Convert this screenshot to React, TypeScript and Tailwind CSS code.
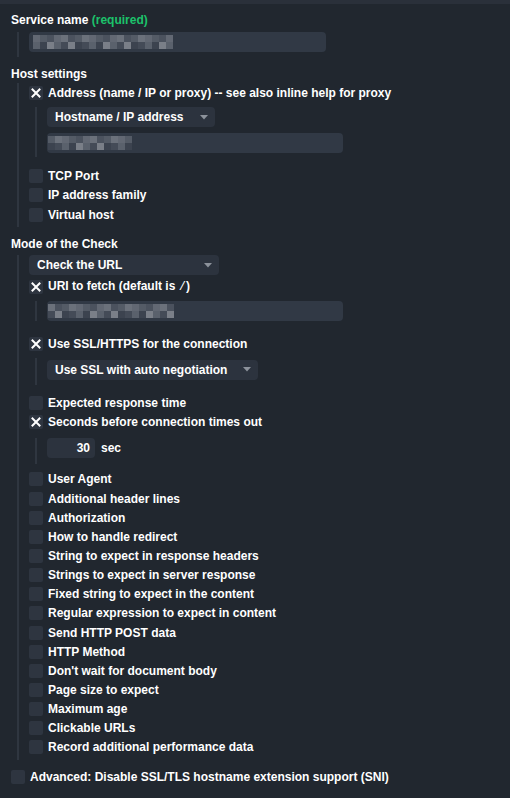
import React from "react";

const font = { fontFamily: '"Liberation Sans", Arial, sans-serif' };

const greys = ["#3c434f", "#4b525e", "#5a616c", "#6b717b", "#7a7f88", "#545b66", "#444b57", "#626873"];

// pixelated (redacted) input value
const Mosaic = ({ cols, seed }: { cols: number; seed: number }) => (
  <div className="flex flex-col">
    {[0, 1].map((r) => (
      <div key={r} className="flex">
        {Array.from({ length: cols }).map((_, c) => (
          <div
            key={c}
            className="h-[7px] w-[7px]"
            style={{ backgroundColor: greys[(c * 5 + r * 3 + seed * 7 + ((c * c) % 4)) % greys.length] }}
          />
        ))}
      </div>
    ))}
  </div>
);

const Check = ({ on }: { on?: boolean }) => (
  <div className="flex h-[14px] w-[14px] shrink-0 items-center justify-center rounded-[2px] bg-[#2e3540]">
    {on && (
      <svg width="10" height="10" viewBox="0 0 10 10">
        <path d="M1.5 1.5 L8.5 8.5 M8.5 1.5 L1.5 8.5" stroke="#fff" strokeWidth="2" strokeLinecap="square" />
      </svg>
    )}
  </div>
);

const Row = ({ label, on, className = "" }: { label: React.ReactNode; on?: boolean; className?: string }) => (
  <div className={"flex h-[19.15px] items-center gap-[5px] " + className}>
    <Check on={on} />
    <span>{label}</span>
  </div>
);

const Select = ({ label, width }: { label: string; width: string }) => (
  <div className={"flex h-[20px] items-center justify-between rounded-[4px] bg-[#2c333e] pl-[8px] pr-[7px] " + width}>
    <span>{label}</span>
    <svg width="8" height="5" viewBox="0 0 8 5">
      <path d="M0 0 H8 L4 4.5 Z" fill="#8c929b" />
    </svg>
  </div>
);

const Input = ({ width, children }: { width: string; children?: React.ReactNode }) => (
  <div className={"flex h-[20px] items-center rounded-[4px] bg-[#313945] pl-[1px] " + width}>{children}</div>
);

const Nest = ({ className = "", children }: { className?: string; children: React.ReactNode }) => (
  <div className={"border-l-2 border-[#2f3640] pl-[10px] " + className}>{children}</div>
);

const options = [
  "User Agent",
  "Additional header lines",
  "Authorization",
  "How to handle redirect",
  "String to expect in response headers",
  "Strings to expect in server response",
  "Fixed string to expect in the content",
  "Regular expression to expect in content",
  "Send HTTP POST data",
  "HTTP Method",
  "Don't wait for document body",
  "Page size to expect",
  "Maximum age",
  "Clickable URLs",
  "Record additional performance data",
];

export default function App() {
  return (
    <div className="h-[798px] w-[510px] overflow-hidden bg-[#21272f] text-[12px] font-bold leading-[16px] text-white" style={font}>
      <div className="h-[4px] bg-[#2a303a]" />
      <div className="px-[11px]">
        <div className="mt-[8px] h-[16px]">
          Service name <span className="text-[#1cc26b]">(required)</span>
        </div>
        <Nest className="ml-[6px] mt-[4px] pb-[5px]">
          <Input width="w-[297px]">
            <div className="ml-[3px]">
              <Mosaic cols={20} seed={1} />
            </div>
          </Input>
        </Nest>

        <div className="mt-[9px] h-[16px]">Host settings</div>
        <Nest className="ml-[6px] mt-[1px] pb-[3px]">
          <Row on label="Address (name / IP or proxy) -- see also inline help for proxy" />
          <Nest className="ml-[6px] mt-[5px] pb-[4px]">
            <Select label="Hostname / IP address" width="w-[168px]" />
            <Input width="mt-[6px] w-[296px]">
              <Mosaic cols={12} seed={3} />
            </Input>
          </Nest>
          <Row label="TCP Port" className="mt-[9px]" />
          <Row label="IP address family" className="!h-[19.5px]" />
          <Row label="Virtual host" className="!h-[19.5px]" />
        </Nest>

        <div className="mt-[9px] h-[16px]">Mode of the Check</div>
        <Nest className="ml-[6px] mt-[3px] pb-[3px]">
          <Select label="Check the URL" width="w-[190px]" />
          <Row
            on
            label={
              <>
                URI to fetch (default is <span className="font-normal" style={{ fontFamily: '"Liberation Mono", monospace' }}>/</span>)
              </>
            }
            className="mt-[2px]"
          />
          <Nest className="ml-[6px] mt-[5px]">
            <Input width="w-[296px]">
              <Mosaic cols={18} seed={5} />
            </Input>
          </Nest>
          <Row on label="Use SSL/HTTPS for the connection" className="mt-[13px]" />
          <Nest className="ml-[6px] mt-[4px] py-[2px] pb-[5px]">
            <Select label="Use SSL with auto negotiation" width="w-[211px]" />
          </Nest>
          <Row label="Expected response time" className="mt-[9px]" />
          <Row on label="Seconds before connection times out" />
          <Nest className="ml-[6px] mt-[6px] pb-[6px]">
            <div className="flex items-center gap-[6px]">
              <div className="flex h-[20px] w-[48px] items-center justify-end rounded-[4px] bg-[#2c333e] pr-[5px]">30</div>
              <span>sec</span>
            </div>
          </Nest>
          <div className="mt-[6px]">
            {options.map((o) => (
              <Row key={o} label={o} />
            ))}
          </div>
        </Nest>

        <Row label="Advanced: Disable SSL/TLS hostname extension support (SNI)" className="mt-[7px]" />
      </div>
    </div>
  );
}
